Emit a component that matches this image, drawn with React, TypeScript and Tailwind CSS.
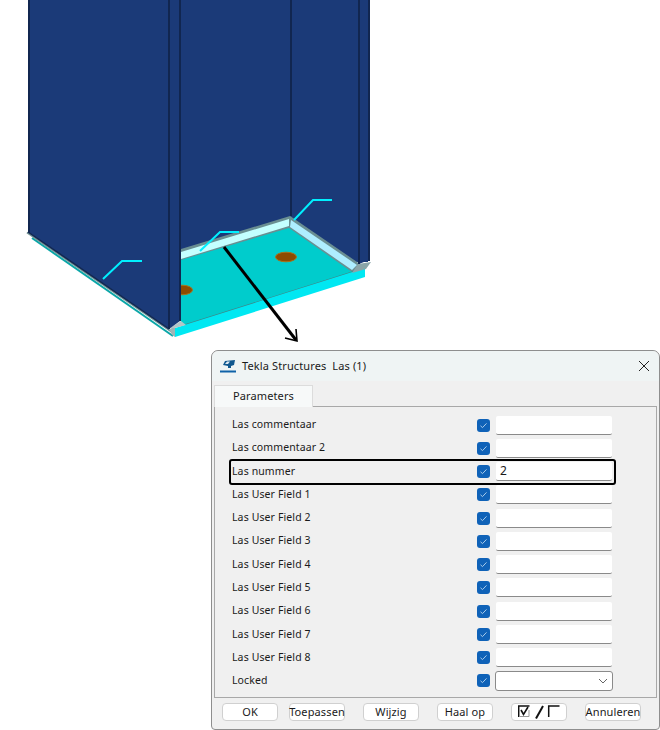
import React from 'react';

const fields = [
    { label: 'Las commentaar', value: '' },
    { label: 'Las commentaar 2', value: '' },
    { label: 'Las nummer', value: '2', marked: true },
    { label: 'Las User Field 1', value: '' },
    { label: 'Las User Field 2', value: '' },
    { label: 'Las User Field 3', value: '' },
    { label: 'Las User Field 4', value: '' },
    { label: 'Las User Field 5', value: '' },
    { label: 'Las User Field 6', value: '' },
    { label: 'Las User Field 7', value: '' },
    { label: 'Las User Field 8', value: '' },
];

function Model() {
    return (
        <svg width="660" height="350" viewBox="0 0 660 350" className="block">
            {/* back walls */}
            <rect x="170" y="0" width="198" height="262" fill="#1b3a78" />
            {/* plate, left edge */}
            <line x1="32" y1="238" x2="173" y2="336" stroke="#0aa6a8" strokeWidth="2" />
            <line x1="27" y1="232.5" x2="172" y2="332" stroke="#6f8f92" strokeWidth="1.8" />
            {/* plate, top */}
            <polygon points="181,249 290,216 293,218 360,264 354,274 185,326 181,323" fill="#6a8f92" />
            <polygon points="181,260 289,228 352,272 185,325 181,322" fill="#00cccc" />
            <line x1="185" y1="325" x2="353" y2="272" stroke="#3f8587" strokeWidth="1.6" />
            <polygon points="181,252 289,219 289,226 181,259" fill="#c4ffff" />
            <polygon points="291,220 357,265 352,270 290,227" fill="#aeeeff" />
            <polygon points="175,328 365,268 365,277 175,337" fill="#00e8f2" />
            <polygon points="358,264 371,262 366,269 352,273" fill="#8aa5a8" />
            <polygon points="169,329 175,327 175,337 172,335" fill="#9fb4b6" />
            <polygon points="181,321 186,325 175,328 170,328" fill="#b4c6c8" />
            {/* holes */}
            <ellipse cx="286" cy="257" rx="10.5" ry="4.8" fill="#8e4b00" stroke="#a8721a" strokeWidth="1" />
            <ellipse cx="182" cy="290" rx="10.5" ry="4.8" fill="#8e4b00" stroke="#a8721a" strokeWidth="1" />
            {/* columns */}
            <polygon points="28,0 169,0 169,329 28,232" fill="#1b3a78" />
            <polygon points="169,0 180,0 180,321 169,329" fill="#1b3a78" />
            <line x1="29" y1="0" x2="29" y2="233" stroke="#112650" strokeWidth="2" />
            <line x1="28" y1="232" x2="169" y2="329" stroke="#112650" strokeWidth="1.5" />
            <line x1="169" y1="0" x2="169" y2="329" stroke="#112650" strokeWidth="2" />
            <line x1="180" y1="0" x2="180" y2="321" stroke="#112650" strokeWidth="2" />
            <line x1="291" y1="0" x2="291" y2="216" stroke="#112650" strokeWidth="2" />
            <polygon points="359,0 369,0 369,260 359,264" fill="#1b3a78" />
            <line x1="359" y1="0" x2="359" y2="264" stroke="#112650" strokeWidth="2" />
            <line x1="369" y1="0" x2="369" y2="261" stroke="#112650" strokeWidth="2" />
            {/* weld marks */}
            <polyline points="103,279 122,261 142,261" fill="none" stroke="#00f0ff" strokeWidth="2" />
            <polyline points="200,251 220,232 239,232" fill="none" stroke="#00f0ff" strokeWidth="2" />
            <polyline points="294,220 313,200 332,200" fill="none" stroke="#00f0ff" strokeWidth="2" />
            {/* arrow */}
            <line x1="224" y1="247" x2="296" y2="340" stroke="#000" strokeWidth="3" />
            <polyline points="285,338 297,341 296,329" fill="none" stroke="#000" strokeWidth="1.6" />
        </svg>
    );
}

function Check() {
    return (
        <span className="w-[13px] h-[13px] rounded-[3px] bg-[#0f62b8] flex items-center justify-center shrink-0">
            <svg width="9" height="9" viewBox="0 0 9 9">
                <path d="M1.5 4.8 L3.5 6.6 L7.5 2.4" fill="none" stroke="#a9cbea" strokeWidth="1" />
            </svg>
        </span>
    );
}

function Btn({ children }: { children: React.ReactNode }) {
    return (
        <button className="w-[56px] h-[18px] bg-white border border-[#d0d0d0] rounded-[4px] flex items-center justify-center text-[11px] text-[#1a1a1a]">
            {children}
        </button>
    );
}

export default function App() {
    return (
        <div className="w-[660px] h-[730px] bg-white overflow-hidden font-['Noto_Sans','Open_Sans',sans-serif] text-[10.5px] tracking-[0.12px] text-[#1a1a1a]">
            <Model />

            <div className="ml-[211px] w-[449px] h-[380px] bg-[#f0f0f0] border border-[#8e8e8e] rounded-t-[7px] rounded-b-[4px] flex flex-col">
                {/* title bar */}
                <div className="h-[30px] bg-[#eff4f4] rounded-t-[7px] flex items-center pl-[8px] pr-[9px]">
                    <svg width="16" height="13" viewBox="0 0 16 13" className="mr-[6px]">
                        <path d="M5 1 L15 0 L14 5 L11 6 L11 8 L8 8 L8 6 L3 5 Z" fill="#10588f" />
                        <path d="M7 1.5 L10 1.5 L8 4 L5 4 Z" fill="#dfeaf2" />
                        <rect x="0" y="10.5" width="16" height="2" fill="#0f62a8" />
                    </svg>
                    <span className="text-[11px] whitespace-pre">Tekla Structures  Las (1)</span>
                    <svg width="12" height="12" viewBox="0 0 12 12" className="ml-auto">
                        <path d="M1 1 L11 11 M11 1 L1 11" stroke="#222" strokeWidth="1" />
                    </svg>
                </div>

                {/* tab */}
                <div className="flex pl-[2px] mt-[3px]">
                    <div className="w-[99px] h-[22px] bg-[#f7f9f9] border border-b-0 border-[#dcdcdc] flex items-center justify-center text-[11px] relative top-[1px]">
                        Parameters
                    </div>
                </div>

                {/* parameter panel */}
                <div className="mx-[2px] h-[292px] border border-[#a8a8a8] pt-[6.4px] pl-[17px]">
                    {fields.map(f => (
                        <div key={f.label} className="h-[23.27px] flex items-center relative">
                            {f.marked && (
                                <div className="absolute left-[-3px] top-[-0.5px] w-[387px] h-[26px] border-2 border-black rounded-[3px]"></div>
                            )}
                            <span className="w-[245px]">{f.label}</span>
                            <Check />
                            <div className="ml-[6px] w-[116px] h-[19px] bg-white border-b border-[#8a8a8a] flex items-center pl-[4px] text-[12px] rounded-[2px]">
                                {f.value}
                            </div>
                        </div>
                    ))}
                    <div className="h-[23.27px] flex items-center">
                        <span className="w-[245px]">Locked</span>
                        <Check />
                        <div className="ml-[5px] w-[118px] h-[20px] bg-white border border-[#8a8a8a] rounded-[3px] flex items-center justify-end pr-[4px]">
                            <svg width="10" height="6" viewBox="0 0 10 6">
                                <path d="M1 1 L5 5 L9 1" fill="none" stroke="#666" strokeWidth="1" />
                            </svg>
                        </div>
                    </div>
                </div>

                {/* buttons */}
                <div className="flex gap-[18px] pl-[10px] mt-[5px]">
                    <div className="w-[57px] mr-[-8px]">
                        <Btn>OK</Btn>
                    </div>
                    <Btn>Toepassen</Btn>
                    <Btn>Wijzig</Btn>
                    <Btn>Haal op</Btn>
                    <Btn>
                        <svg width="42" height="14" viewBox="0 0 42 14">
                            <path d="M0.7 12 V1 H11.5" fill="none" stroke="#111" strokeWidth="1.5" />
                            <path d="M1 11.5 H11 V5" fill="none" stroke="#999" strokeWidth="1" />
                            <path d="M3 5 L5.5 9.5 L10 2" fill="none" stroke="#111" strokeWidth="1.6" />
                            <path d="M25 1 L18 13.5" stroke="#111" strokeWidth="2" />
                            <path d="M30.7 12 V1 H41.5" fill="none" stroke="#111" strokeWidth="1.5" />
                        </svg>
                    </Btn>
                    <Btn>Annuleren</Btn>
                </div>
            </div>
        </div>
    );
}
